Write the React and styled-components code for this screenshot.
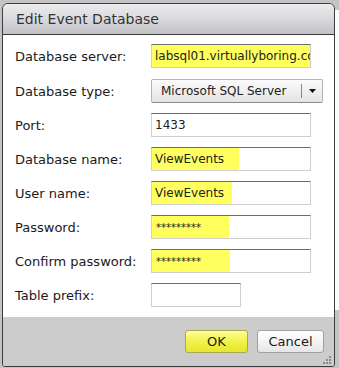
import styled, { createGlobalStyle } from "styled-components";

const GlobalStyle = createGlobalStyle`
  html, body {
    margin: 0;
    padding: 0;
  }
  body {
    background-color: #c4c4c4;
    background-image: linear-gradient(#ffffff, #ffffff);
    background-repeat: no-repeat;
    background-position: right 0 top 10px;
    background-size: 4px 300px;
    font-family: "DejaVu Sans", Verdana, sans-serif;
    width: 339px;
    height: 368px;
    overflow: hidden;
  }
`;

const rows = [
  { label: "Database server:", value: "labsql01.virtuallyboring.com", mark: 160 },
  { label: "Database type:", select: "Microsoft SQL Server" },
  { label: "Port:", value: "1433" },
  { label: "Database name:", value: "ViewEvents", mark: 87 },
  { label: "User name:", value: "ViewEvents", mark: 80 },
  { label: "Password:", value: "*********", mark: 77, stars: true },
  { label: "Confirm password:", value: "*********", mark: 78, stars: true },
  { label: "Table prefix:", value: "", short: true },
];

const App = () => {
  return (
    <>
      <GlobalStyle />
      <Dialog>
        <TitleBar>Edit Event Database</TitleBar>
        <Body>
          {rows.map((r) => (
            <Row key={r.label}>
              <Label>{r.label}</Label>
              {r.select ? (
                <Select>
                  <SelectText>{r.select}</SelectText>
                  <SelectArrow>
                    <svg width="7" height="4" viewBox="0 0 7 4">
                      <path d="M0 0h7L3.5 4z" fill="#111" />
                    </svg>
                  </SelectArrow>
                </Select>
              ) : (
                <Field $short={r.short}>
                  {r.mark && <Mark style={{ width: r.mark }} />}
                  <FieldText $stars={r.stars}>{r.value}</FieldText>
                </Field>
              )}
            </Row>
          ))}
        </Body>
        <Footer>
          <Button $primary>OK</Button>
          <Button>Cancel</Button>
          <Grip>
            <svg width="8" height="8" viewBox="0 0 8 8">
              <rect x="6" y="0" width="2" height="2" fill="#8a8a8a" />
              <rect x="3" y="3" width="2" height="2" fill="#8a8a8a" />
              <rect x="6" y="3" width="2" height="2" fill="#8a8a8a" />
              <rect x="0" y="6" width="2" height="2" fill="#8a8a8a" />
              <rect x="3" y="6" width="2" height="2" fill="#8a8a8a" />
              <rect x="6" y="6" width="2" height="2" fill="#8a8a8a" />
            </svg>
          </Grip>
        </Footer>
      </Dialog>
    </>
  );
};

export default App;

const Dialog = styled.div`
  position: relative;
  margin: 3px 0 0 2px;
  width: 333px;
  height: 364px;
  box-sizing: border-box;
  border: 1px solid #3c3c3c;
  border-radius: 6px 6px 3px 3px;
  background: #cccccc;
  display: flex;
  flex-direction: column;
  overflow: hidden;
`;

const TitleBar = styled.div`
  height: 31px;
  flex: none;
  box-sizing: border-box;
  padding: 0 0 0 13px;
  display: flex;
  align-items: center;
  font-size: 14px;
  color: #333333;
  background: linear-gradient(#ebebed 0%, #dcdce0 45%, #c2c2c6 100%);
  border-bottom: 1px solid #3a3a3a;
`;

const Body = styled.div`
  background: #ffffff;
  padding: 9px 0 10px 12px;
  display: flex;
  flex-direction: column;
  gap: 10px;
`;

const Row = styled.div`
  display: grid;
  grid-template-columns: 136px auto;
  align-items: center;
  &:first-child {
    margin-bottom: 1px;
  }
`;

const Label = styled.div`
  font-size: 13px;
  color: #1a1a1a;
`;

const Field = styled.div`
  position: relative;
  width: ${(p) => (p.$short ? "90px" : "160px")};
  height: 24px;
  box-sizing: border-box;
  border: 1px solid #cfcfcf;
  border-top-color: #6e6e6e;
  background: #ffffff;
  overflow: hidden;
  display: flex;
  align-items: center;
`;

const Mark = styled.div`
  position: absolute;
  left: 0;
  top: 0;
  bottom: 0;
  background: #ffff5e;
`;

const FieldText = styled.span`
  position: relative;
  padding-left: ${(p) => (p.$stars ? "4px" : "3px")};
  white-space: nowrap;
  font-size: ${(p) => (p.$stars ? "10px" : "12px")};
  letter-spacing: 0;
  color: #222222;
`;

const Select = styled.div`
  width: 172px;
  height: 24px;
  box-sizing: border-box;
  border: 1px solid #b4b4b4;
  border-bottom-color: #8c8c8c;
  border-radius: 2px;
  background: linear-gradient(#fbfbfb, #e4e4e4);
  display: flex;
  align-items: center;
`;

const SelectText = styled.span`
  flex: 1;
  padding-left: 9px;
  font-size: 12px;
  color: #222222;
  white-space: nowrap;
`;

const SelectArrow = styled.span`
  width: 20px;
  height: 14px;
  border-left: 1px solid #8a8a8a;
  display: flex;
  align-items: center;
  justify-content: center;
`;

const Footer = styled.div`
  position: relative;
  flex: 1;
  background: #cccccc;
  display: flex;
  justify-content: flex-end;
  align-items: flex-start;
  gap: 9px;
  padding: 13px 10px 0 0;
`;

const Button = styled.button`
  height: 23px;
  min-width: ${(p) => (p.$primary ? "63px" : "67px")};
  box-sizing: border-box;
  font-family: "DejaVu Sans", Verdana, sans-serif;
  font-size: 13px;
  color: #1a1a1a;
  border: 1px solid ${(p) => (p.$primary ? "#a8a850" : "#a0a0a0")};
  border-radius: 3px;
  background: ${(p) =>
    p.$primary
      ? "linear-gradient(#ffff9a, #f2f24a 50%, #e6e62e)"
      : "linear-gradient(#ffffff, #f4f4f4 50%, #e6e6e6)"};
  padding: 0 10px;
`;

const Grip = styled.div`
  position: absolute;
  right: 3px;
  bottom: 2px;
  line-height: 0;
`;
